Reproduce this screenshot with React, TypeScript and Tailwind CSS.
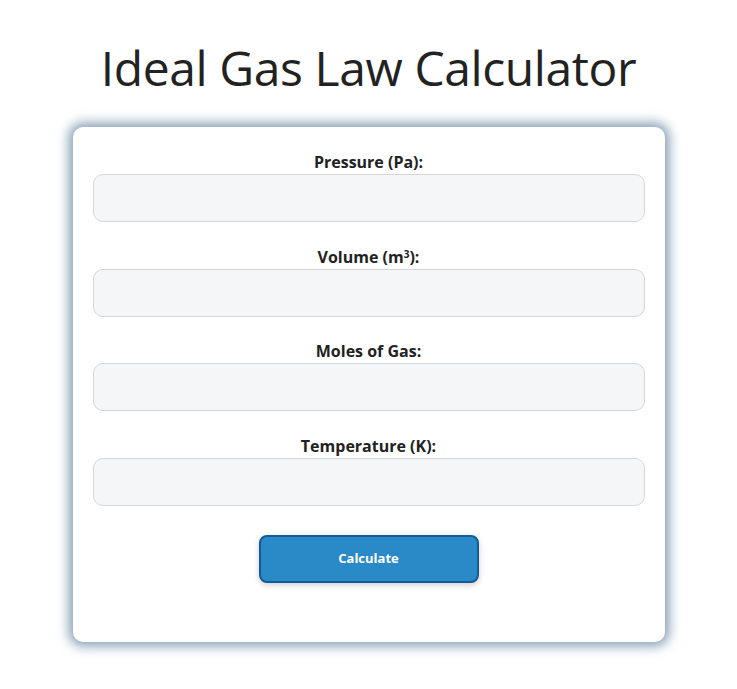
export default function App() {
  const fields = ["Pressure (Pa):", "Volume (m³):", "Moles of Gas:", "Temperature (K):"];
  return (
    <div className="min-h-screen bg-white flex flex-col items-center text-[#222]" style={{ fontFamily: '"Open Sans", "Noto Sans", sans-serif' }}>
      <h1 className="mt-[36px] text-[48px] leading-[64px] tracking-[-0.4px] font-normal text-[#222]">Ideal Gas Law Calculator</h1>
      <div className="mt-[27px] w-[592px] bg-white rounded-[10px] px-[20px] pt-[23px] pb-[59px] shadow-[0_0_12px_4px_rgba(50,90,130,0.6)] flex flex-col">
        {fields.map((f, i) => (
          <div key={f} className={`flex flex-col ${i > 0 ? "mt-[22.5px]" : ""}`}>
            <label className="text-center text-[16px] font-bold leading-[24px] text-[#222]">
              {f === "Volume (m³):" ? (
                <>Volume (m<sup className="text-[10px]">3</sup>):</>
              ) : f}
            </label>
            <input className="h-[48px] w-full rounded-[10px] border border-[#d6d6d6] bg-[#f5f6f8] outline-none" />
          </div>
        ))}
        <button className="mt-[29px] self-center w-[220px] h-[48px] rounded-[8px] bg-[#2a8ac8] border-2 border-[#155a99] text-white text-[13px] font-bold shadow-[0_2px_6px_rgba(0,0,0,0.2)]">
          Calculate
        </button>
      </div>
    </div>
  );
}
